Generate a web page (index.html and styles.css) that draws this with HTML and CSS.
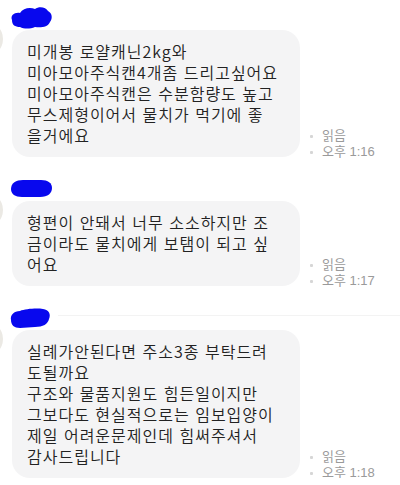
FILE: index.html
```html
<!DOCTYPE html>
<html lang="ko">
<head>
<meta charset="utf-8">
<title>채팅</title>
<link rel="stylesheet" href="styles.css">
</head>
<body>
<div class="chat">
  <div class="msg">
    <div class="avatar"></div>
    <div class="content">
      <div class="name">
        <svg class="blob" width="46" height="24" viewBox="0 0 46 24"><path d="M4 14 C2 9 7 6 12 7 C15 2 22 1 27 3 C31 0 38 1 40 5 C44 7 45 12 42 16 C40 21 33 22 27 21 C22 23 16 23 12 21 C7 21 4 19 4 14 Z" fill="#0808ee"/></svg>
      </div>
      <div class="row">
        <div class="bubble">미개봉 로얄캐닌2kg와
미아모아주식캔4개좀 드리고싶어요
미아모아주식캔은 수분함량도 높고
무스제형이어서 물치가 먹기에 좋
을거에요</div>
        <div class="meta">
          <div class="meta-line"><span class="dot"></span>읽음</div>
          <div class="meta-line"><span class="dot"></span>오후 1:16</div>
        </div>
      </div>
    </div>
  </div>

  <div class="msg">
    <div class="avatar"></div>
    <div class="content">
      <div class="name">
        <svg class="blob" width="46" height="24" viewBox="0 0 46 24"><path d="M3 12 C3 6 8 3 15 3 L33 3 C40 3 44 6 44 11 C44 16 40 20 32 20 L14 20 C7 20 3 17 3 12 Z" fill="#0808ee"/></svg>
      </div>
      <div class="row">
        <div class="bubble">형편이 안돼서 너무 소소하지만 조
금이라도 물치에게 보탬이 되고 싶
어요</div>
        <div class="meta">
          <div class="meta-line"><span class="dot"></span>읽음</div>
          <div class="meta-line"><span class="dot"></span>오후 1:17</div>
        </div>
      </div>
    </div>
  </div>

  <div class="msg">
    <div class="avatar"></div>
    <div class="content">
      <div class="name divider">
        <svg class="blob" width="46" height="24" viewBox="0 0 46 24"><path d="M3 14 C2 9 6 5 12 5 C17 3 28 2 35 3 C41 4 43 8 41 13 C40 18 35 21 27 21 L12 22 C6 22 3 19 3 14 Z" fill="#0808ee"/></svg>
      </div>
      <div class="row">
        <div class="bubble">실례가안된다면 주소3종 부탁드려
도될까요
구조와 물품지원도 힘든일이지만
그보다도 현실적으로는 임보입양이
제일 어려운문제인데 힘써주셔서
감사드립니다</div>
        <div class="meta">
          <div class="meta-line"><span class="dot"></span>읽음</div>
          <div class="meta-line"><span class="dot"></span>오후 1:18</div>
        </div>
      </div>
    </div>
  </div>
</div>
</body>
</html>
```

FILE: styles.css
```css
* { box-sizing: border-box; }
html, body {
  margin: 0;
  background: #ffffff;
}
body {
  font-family: "Noto Sans CJK KR", "Noto Sans", sans-serif;
  color: #222222;
  overflow: hidden;
}
.chat {
  padding-top: 7px;
  display: flex;
  flex-direction: column;
  gap: 21px;
}
.msg {
  display: flex;
  align-items: flex-start;
}
.avatar {
  flex-shrink: 0;
  width: 36px;
  height: 36px;
  border-radius: 50%;
  background: #ebe9e4;
  margin-left: -33px;
  margin-top: 14px;
}
.content {
  margin-left: 9px;
  flex: 1;
}
.name {
  height: 23px;
  display: flex;
  align-items: flex-end;
}
.name.divider {
  background: linear-gradient(#ffffff 0 8px, #f3f3f3 8px 9px, #ffffff 9px) no-repeat;
  background-position: 46px 0;
}
.blob {
  display: block;
  margin-left: -4px;
}
.row {
  display: flex;
  align-items: flex-end;
  gap: 10px;
}
.bubble {
  flex-shrink: 0;
  width: 288px;
  background: #f4f4f5;
  border-radius: 18px;
  padding: 11px 4px 11px 15px;
  font-size: 16px;
  font-weight: 350;
  letter-spacing: 1px;
  line-height: 21px;
  white-space: pre-line;
  color: #222222;
}
.meta {
  font-family: "Liberation Sans", "Noto Sans CJK KR", sans-serif;
  font-size: 13px;
  line-height: 16px;
  color: #9a9a9a;
  margin-bottom: -3px;
  white-space: nowrap;
}
.meta-line {
  display: flex;
  align-items: center;
  gap: 9px;
}
.dot {
  width: 3px;
  height: 3px;
  background: #d6d6d6;
  border-radius: 1px;
}
```
